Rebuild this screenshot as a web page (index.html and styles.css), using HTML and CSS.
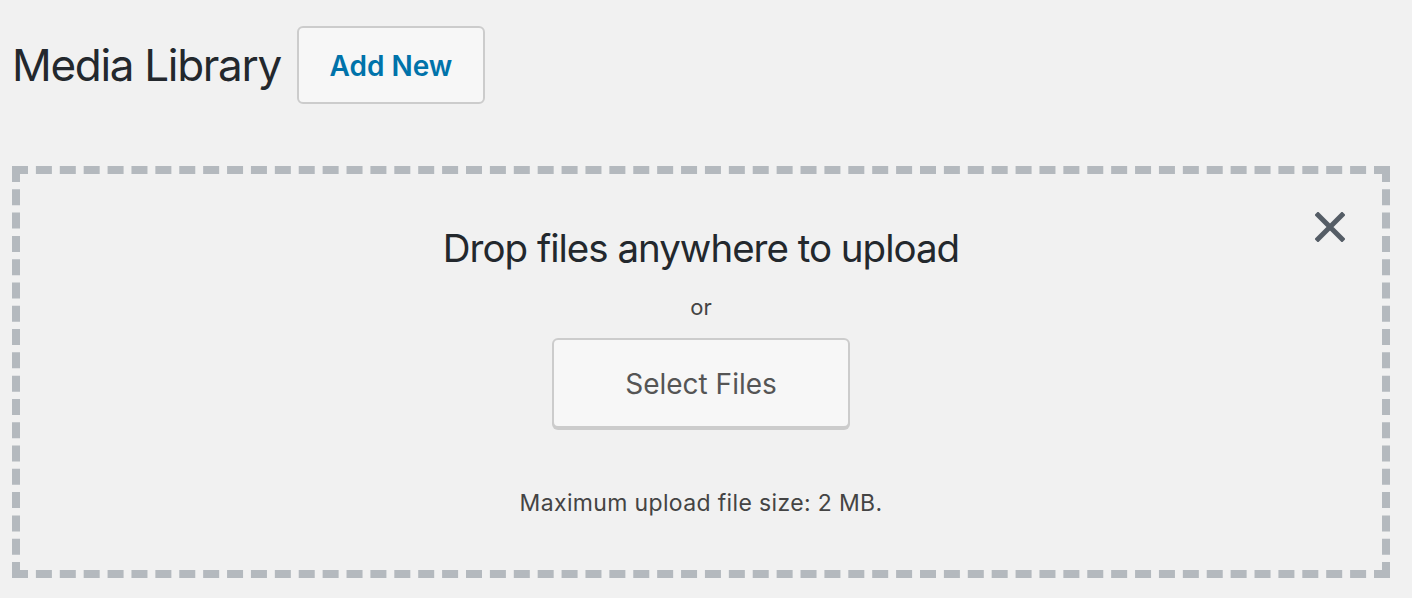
FILE: index.html
```html
<!DOCTYPE html>
<html lang="en">
<head>
<meta charset="utf-8">
<title>Media Library</title>
<link rel="stylesheet" href="styles.css">
</head>
<body>
<div class="wrap">
  <div class="header">
    <h1 class="page-title">Media Library</h1>
    <a class="add-new" href="#">Add New</a>
  </div>
  <div class="uploader">
    <button class="close" aria-label="Close uploader">
      <svg width="30" height="30" viewBox="0 0 30 30"><path d="M3 3 L27 27 M27 3 L3 27" stroke="#555d66" stroke-width="5" stroke-linecap="square" fill="none"/></svg>
    </button>
    <div class="inner">
      <h2 class="drop-title">Drop files anywhere to upload</h2>
      <p class="or">or</p>
      <button class="select-files">Select Files</button>
      <p class="max-size">Maximum upload file size: 2 MB.</p>
    </div>
  </div>
</div>
</body>
</html>
```
FILE: styles.css
```css
html, body {
  margin: 0;
  padding: 0;
  background: #f1f1f1;
}
body {
  font-family: Inter, "Noto Sans", sans-serif;
  color: #444;
}
.wrap {
  width: 1412px;
  height: 598px;
  overflow: hidden;
}
.header {
  display: flex;
  align-items: flex-start;
  padding: 26px 0 0 12px;
}
.page-title {
  margin: 0;
  font-size: 44px;
  font-weight: 400;
  line-height: 78px;
  color: #23282d;
  letter-spacing: -1.3px;
}
.add-new {
  margin-left: 16px;
  box-sizing: border-box;
  width: 188px;
  height: 78px;
  padding-top: 2px;
  display: flex;
  align-items: center;
  justify-content: center;
  border: 2px solid #ccc;
  border-radius: 6px;
  background: #f7f7f7;
  color: #0073aa;
  font-size: 28px;
  font-weight: 600;
  text-decoration: none;
}
.uploader {
  position: relative;
  box-sizing: border-box;
  margin: 62px 0 0 12px;
  width: 1378px;
  height: 412px;
  border: 8px dashed #b4b9be;
}
.close {
  position: absolute;
  top: 38px;
  right: 37px;
  width: 30px;
  height: 30px;
  padding: 0;
  border: 0;
  background: transparent;
  display: flex;
}
.inner {
  display: flex;
  flex-direction: column;
  align-items: center;
  padding-top: 50px;
}
.drop-title {
  margin: 0;
  font-size: 38.5px;
  font-weight: 400;
  line-height: 48px;
  color: #23282d;
  letter-spacing: -1px;
}
.or {
  margin: 20px 0 0;
  font-size: 22px;
  line-height: 30px;
  color: #444;
}
.select-files {
  margin-top: 16px;
  box-sizing: border-box;
  width: 298px;
  height: 90px;
  padding-top: 2px;
  border: 2px solid #ccc;
  border-radius: 6px;
  background: #f7f7f7;
  box-shadow: 0 2px 0 #ccc;
  font-family: inherit;
  font-size: 28px;
  color: #555;
}
.max-size {
  margin: 60px 0 0;
  font-size: 23px;
  line-height: 30px;
  color: #444;
  letter-spacing: 0.35px;
}
```
